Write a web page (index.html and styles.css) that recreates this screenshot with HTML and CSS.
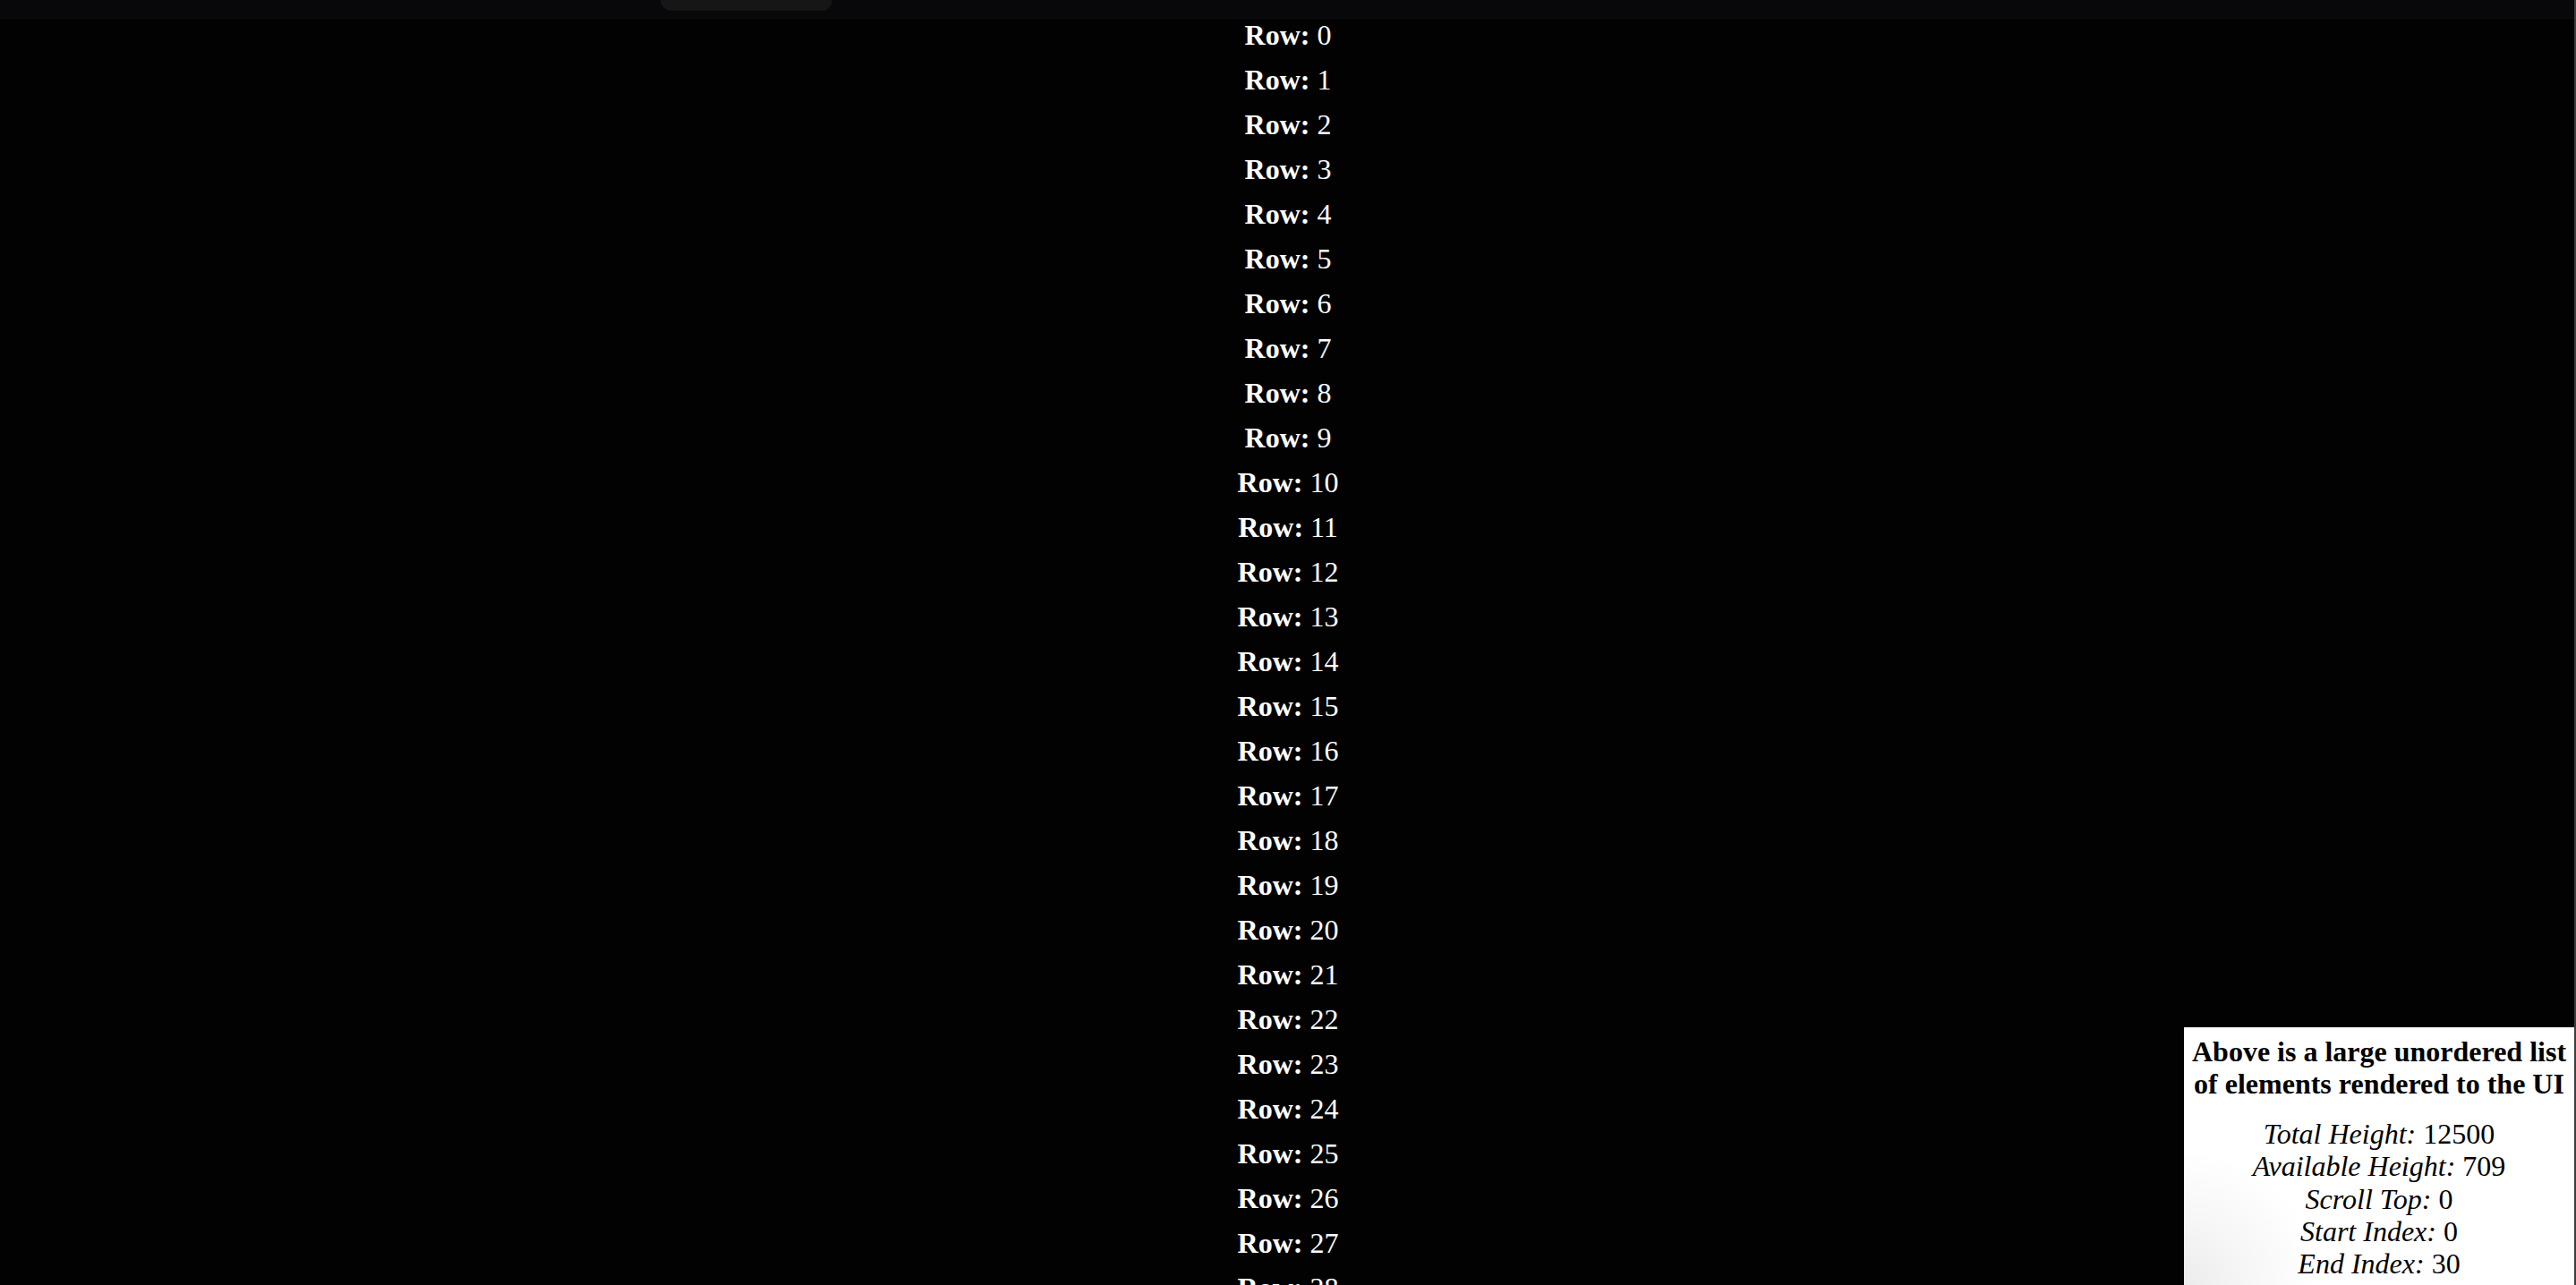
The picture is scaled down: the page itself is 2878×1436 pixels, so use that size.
FILE: index.html
```html
<!DOCTYPE html>
<html lang="en">
<head>
<meta charset="utf-8">
<title>Virtual list</title>
<link rel="stylesheet" href="styles.css">
</head>
<body>
<div class="page">
  <main class="main">
    <header class="topbar"><div class="pill"></div></header>
    <ul class="rows">
      <li class="row"><b>Row:</b> 0</li>
      <li class="row"><b>Row:</b> 1</li>
      <li class="row"><b>Row:</b> 2</li>
      <li class="row"><b>Row:</b> 3</li>
      <li class="row"><b>Row:</b> 4</li>
      <li class="row"><b>Row:</b> 5</li>
      <li class="row"><b>Row:</b> 6</li>
      <li class="row"><b>Row:</b> 7</li>
      <li class="row"><b>Row:</b> 8</li>
      <li class="row"><b>Row:</b> 9</li>
      <li class="row"><b>Row:</b> 10</li>
      <li class="row"><b>Row:</b> 11</li>
      <li class="row"><b>Row:</b> 12</li>
      <li class="row"><b>Row:</b> 13</li>
      <li class="row"><b>Row:</b> 14</li>
      <li class="row"><b>Row:</b> 15</li>
      <li class="row"><b>Row:</b> 16</li>
      <li class="row"><b>Row:</b> 17</li>
      <li class="row"><b>Row:</b> 18</li>
      <li class="row"><b>Row:</b> 19</li>
      <li class="row"><b>Row:</b> 20</li>
      <li class="row"><b>Row:</b> 21</li>
      <li class="row"><b>Row:</b> 22</li>
      <li class="row"><b>Row:</b> 23</li>
      <li class="row"><b>Row:</b> 24</li>
      <li class="row"><b>Row:</b> 25</li>
      <li class="row"><b>Row:</b> 26</li>
      <li class="row"><b>Row:</b> 27</li>
      <li class="row"><b>Row:</b> 28</li>
    </ul>
  </main>
  <div class="track"></div>
</div>
<aside class="info">
  <h4 class="info-title">Above is a large unordered list of elements rendered to the UI</h4>
  <div class="stat"><i>Total Height:</i> 12500</div>
  <div class="stat"><i>Available Height:</i> 709</div>
  <div class="stat"><i>Scroll Top:</i> 0</div>
  <div class="stat"><i>Start Index:</i> 0</div>
  <div class="stat"><i>End Index:</i> 30</div>
</aside>
</body>
</html>
```

FILE: styles.css
```css
html, body {
  margin: 0;
  padding: 0;
  height: 1436px;
  overflow: hidden;
  background: #020202;
}

body {
  font-family: "Liberation Serif", "Times New Roman", serif;
  font-size: 32px;
  color: #ffffff;
}

.page {
  display: flex;
  height: 1436px;
}

.main {
  flex: 1;
  min-width: 0;
}

.track {
  width: 2px;
  background: #3e3e3e;
}

.topbar {
  height: 20px;
  background: #08080a;
  border-bottom: 1px solid #0f0f12;
  padding-left: 738px;
  box-sizing: content-box;
}

.pill {
  width: 192px;
  height: 12px;
  background: #161616;
  border-radius: 0 0 13px 13px;
}

.rows {
  list-style: none;
  margin: 0;
  padding: 0;
  text-align: center;
}

.row {
  height: 50px;
  line-height: normal;
  padding-left: 2px;
}

.row b {
  font-weight: bold;
}

.info {
  position: fixed;
  right: 2px;
  top: 1148px;
  width: 436px;
  box-sizing: border-box;
  padding: 9px 8px 6px;
  background: #ffffff radial-gradient(circle at 0% 100%, #ececec 0, #f6f6f6 70px, #ffffff 150px);
  color: #000000;
  text-align: center;
}

.info-title {
  margin: 0 0 20px;
  font-size: 32px;
  font-weight: bold;
  line-height: 36px;
}

.stat {
  line-height: 36.3px;
}
```
